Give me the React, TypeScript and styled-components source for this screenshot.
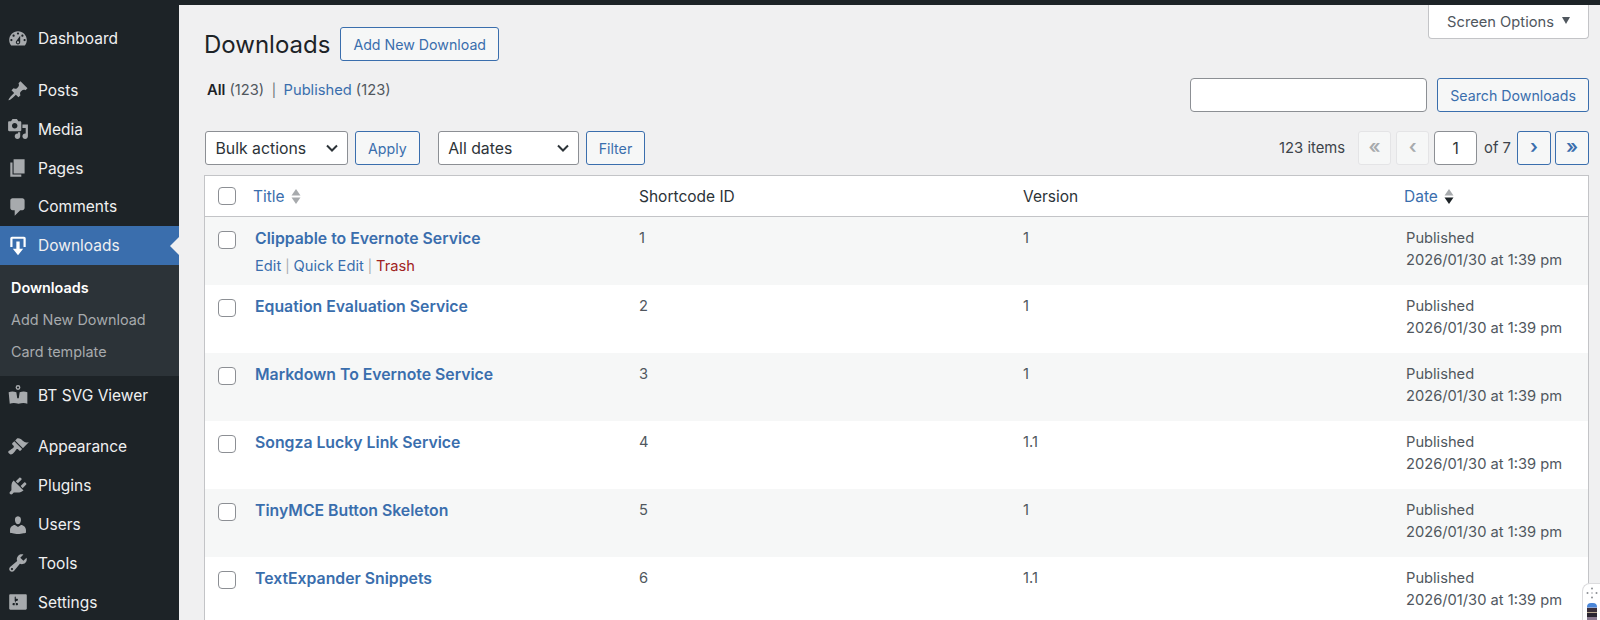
import React from "react";
import styled, { createGlobalStyle } from "styled-components";

const GlobalStyle = createGlobalStyle`
  html, body {
    margin: 0;
    padding: 0;
    height: 620px;
    overflow: hidden;
    background: #f0f0f1;
    font-family: Inter, "Liberation Sans", sans-serif;
    font-size: 15.5px;
    color: #3c434a;
  }
`;

const Page = styled.div`
  display: flex;
  flex-direction: column;
  height: 620px;
  overflow: hidden;
`;

const TopBar = styled.div`
  height: 5px;
  flex: none;
  background: #1d2327;
`;

const Body = styled.div`
  display: flex;
  flex: 1;
  min-height: 0;
`;

const Sidebar = styled.nav`
  width: 179px;
  flex: none;
  background: #1d2327;
  padding-top: 14.4px;
`;

const MenuItem = styled.a<{ $current?: boolean; $gap?: number }>`
  position: relative;
  display: flex;
  align-items: center;
  height: 38.8px;
  margin-top: ${(p) => p.$gap ?? 0}px;
  padding-left: 7px;
  color: #f0f0f1;
  background: ${(p) => (p.$current ? "#3a6ead" : "transparent")};

  svg {
    width: 22px;
    height: 22px;
    flex: none;
    fill: ${(p) => (p.$current ? "#fff" : "#a7aaad")};
  }

  span {
    margin-left: 9px;
  }
`;

const CurrentArrow = styled.i`
  position: absolute;
  right: 0;
  top: 50%;
  margin-top: -9px;
  border: 9px solid transparent;
  border-left-width: 0;
  border-right: 9px solid #f0f0f1;
  width: 0;
  height: 0;
`;

const SubMenu = styled.div`
  display: flex;
  flex-direction: column;
  height: 110.6px;
  padding: 6.6px 0 0 11px;
  box-sizing: border-box;
  background: #2c3338;
`;

const SubItem = styled.a<{ $active?: boolean }>`
  height: 32px;
  display: flex;
  align-items: center;
  font-size: 14.4px;
  color: ${(p) => (p.$active ? "#fff" : "#a7aaad")};
  font-weight: ${(p) => (p.$active ? 600 : 400)};
`;

const Main = styled.main`
  flex: 1;
  min-width: 0;
  position: relative;
  padding: 0 11px 0 25px;
`;

const ScreenOptions = styled.div`
  position: absolute;
  top: 0;
  right: 11px;
  width: 161px;
  height: 34px;
  box-sizing: border-box;
  display: flex;
  align-items: center;
  justify-content: center;
  gap: 8px;
  background: #fff;
  border: 1px solid #c3c4c7;
  border-top: none;
  border-radius: 0 0 4px 4px;
  color: #50575e;
  font-size: 14.7px;

  i {
    width: 0;
    height: 0;
    border: 4.5px solid transparent;
    border-top: 7px solid #50575e;
    border-bottom: none;
    margin-top: -3px;
  }
`;

const TitleRow = styled.div`
  display: flex;
  align-items: center;
  gap: 10px;
  padding-top: 22px;
`;

const Heading = styled.h1`
  margin: 0;
  font-size: 24px;
  font-weight: 400;
  color: #1d2327;
`;

const Button = styled.a<{ $w?: number; $disabled?: boolean; $glyph?: boolean }>`
  display: inline-flex;
  align-items: center;
  justify-content: center;
  box-sizing: border-box;
  height: 34px;
  width: ${(p) => (p.$w ? `${p.$w}px` : "auto")};
  padding: ${(p) => (p.$w ? 0 : "0 12px")};
  flex: none;
  font-size: ${(p) => (p.$glyph ? "19px" : "14.2px")};
  font-weight: ${(p) => (p.$glyph ? 600 : 400)};
  padding-bottom: ${(p) => (p.$glyph ? "3px" : "0")};
  color: ${(p) => (p.$disabled ? "#a7aaad" : "#3a6ead")};
  background: #f6f7f7;
  border: 1px solid ${(p) => (p.$disabled ? "#e4e4e6" : "#3a6ead")};
  border-radius: 3px;
`;

const NextButton = styled(Button)`
  margin-right: -1px;
`;

const Filters = styled.div`
  margin-top: 20px;
  padding-left: 3px;
  font-size: 14.7px;
  height: 18px;
  color: #50575e;

  b {
    color: #1d2327;
    font-weight: 600;
  }

  a {
    color: #3a6ead;
  }
`;

const Separator = styled.span`
  margin: 0 7.5px;
  font-size: 13px;
  color: #646970;
`;

const SearchBox = styled.div`
  display: flex;
  gap: 10px;
  position: absolute;
  top: 73px;
  right: 11px;
`;

const Input = styled.div`
  box-sizing: border-box;
  width: 237px;
  height: 34px;
  background: #fff;
  border: 1px solid #8c8f94;
  border-radius: 4px;
`;

const ToolBar = styled.div`
  display: flex;
  align-items: center;
  justify-content: space-between;
  margin-top: 32px;
  padding-left: 1px;
  height: 34px;
`;

const Group = styled.div<{ $gap?: number }>`
  display: flex;
  align-items: center;
  gap: ${(p) => p.$gap ?? 7}px;
`;

const Select = styled.div<{ $w: number }>`
  box-sizing: border-box;
  display: flex;
  align-items: center;
  justify-content: space-between;
  width: ${(p) => p.$w}px;
  height: 34px;
  padding: 0 8px 0 9.5px;
  background: #fff;
  border: 1px solid #8c8f94;
  border-radius: 3px;
  color: #2c3338;
  font-size: 15.8px;

  svg {
    width: 14px;
    height: 14px;
    stroke: #2c3338;
    fill: none;
    stroke-width: 2;
  }
`;

const PageInput = styled.div`
  box-sizing: border-box;
  display: flex;
  align-items: center;
  justify-content: center;
  width: 43px;
  height: 34px;
  background: #fff;
  border: 1px solid #8c8f94;
  border-radius: 4px;
  color: #2c3338;
`;

const Count = styled.span`
  font-size: 14.8px;
  color: #3c434a;
`;

const PageCount = styled(Count)`
  margin: 0 1px 0 2px;
`;

const Pagination = styled(Group)`
  gap: 5px;
  margin-left: 8px;
`;

const Table = styled.div`
  margin-top: 10px;
  background: #fff;
  border: 1px solid #c3c4c7;
  border-bottom: none;
`;

const gridColumns = "434px 384px 381px 1fr";

const HeaderRow = styled.div`
  display: grid;
  grid-template-columns: ${gridColumns};
  height: 40px;
  align-items: center;
  border-bottom: 1px solid #c3c4c7;
  font-size: 15.5px;
  color: #2c3338;
`;

const Row = styled.div<{ $alt?: boolean }>`
  display: grid;
  grid-template-columns: ${gridColumns};
  height: 68px;
  box-sizing: border-box;
  padding-top: 10px;
  background: ${(p) => (p.$alt ? "#f6f7f7" : "#fff")};
  font-size: 14.7px;
  color: #50575e;
  line-height: 22px;
`;

const TitleCell = styled.div<{ $head?: boolean }>`
  display: flex;
  align-items: ${(p) => (p.$head ? "center" : "flex-start")};
  padding-left: 13px;
`;

const Checkbox = styled.i<{ $head?: boolean }>`
  flex: none;
  display: block;
  box-sizing: border-box;
  width: 18px;
  height: 18px;
  margin: ${(p) => (p.$head ? "0 17px 0 0" : "4px 15px 0 0")};
  background: #fff;
  border: 1px solid #8c8f94;
  border-radius: 4px;
`;

const HeadLink = styled.a`
  display: inline-flex;
  align-items: center;
  gap: 6px;
  color: #3a6ead;
`;

const RowTitle = styled.a`
  display: block;
  margin-left: 4px;
  font-weight: 600;
  font-size: 15.8px;
  line-height: 24px;
  color: #3a6ead;
`;

const Actions = styled.div`
  margin: 4px 0 0 4px;
  font-size: 14.7px;
  color: #a7aaad;

  a {
    color: #3a6ead;
  }

  a.trash {
    color: #a02222;
  }
`;

const Pipe = styled.span`
  margin: 0 4px;
  font-size: 13px;
`;

const DateCell = styled.div`
  padding-left: 2px;
`;

const SortIcon = styled.svg`
  width: 10px;
  height: 17px;
`;

const FloatingWidget = styled.div`
  position: absolute;
  right: 0;
  bottom: 0;
  width: 18px;
  height: 37px;
  display: flex;
  flex-direction: column;
  align-items: center;
  padding-top: 3px;
  box-sizing: border-box;
  background: #fff;
  border: 1px solid #dcdcde;
  border-right: none;
  border-bottom: none;
  border-radius: 8px 0 0 0;

  svg {
    width: 12px;
    height: 12px;
    flex: none;
  }
`;

const WidgetStack = styled.div`
  width: 10px;
  height: 20px;
  margin-top: 4px;
  border-radius: 4px 4px 0 0;
  background: linear-gradient(
    #4a86d8 0 22%,
    #8fa8d8 22% 32%,
    #3a2f3a 32% 50%,
    #b8a890 50% 60%,
    #2a2530 60% 80%,
    #8a7a90 80%
  );
`;

const icons: Record<string, string> = {
  dashboard:
    "M3.76 16h12.48c1.1-1.37 1.76-3.11 1.76-5 0-4.42-3.58-8-8-8s-8 3.58-8 8c0 1.89.66 3.63 1.76 5zM10 4c.55 0 1 .45 1 1s-.45 1-1 1-1-.45-1-1 .45-1 1-1zM6 6c.55 0 1 .45 1 1s-.45 1-1 1-1-.45-1-1 .45-1 1-1zm8 0c.55 0 1 .45 1 1s-.45 1-1 1-1-.45-1-1 .45-1 1-1zm-5.37 5.55L12 7v6c0 1.1-.9 2-2 2s-2-.9-2-2c0-.57.24-1.08.63-1.45zM4 10c.55 0 1 .45 1 1s-.45 1-1 1-1-.45-1-1 .45-1 1-1zm12 0c.55 0 1 .45 1 1s-.45 1-1 1-1-.45-1-1 .45-1 1-1zm-5 3c0-.55-.45-1-1-1s-1 .45-1 1 .45 1 1 1 1-.45 1-1z",
  posts:
    "M10.44 3.02l1.82-1.82 6.36 6.35-1.83 1.82c-1.05-.68-2.48-.57-3.41.36l-.75.75c-.92.93-1.04 2.35-.35 3.41l-1.83 1.82-2.41-2.41-2.8 2.79c-.42.42-3.38 2.71-3.8 2.29s1.86-3.39 2.28-3.81l2.79-2.79L4.1 9.36l1.83-1.82c1.05.69 2.48.57 3.4-.36l.75-.75c.93-.92 1.05-2.35.36-3.41z",
  media:
    "M13 11V4c0-.55-.45-1-1-1h-1.67L9 1H5L3.67 3H2c-.55 0-1 .45-1 1v7c0 .55.45 1 1 1h10c.55 0 1-.45 1-1zM7 4.5c1.38 0 2.5 1.12 2.5 2.5S8.38 9.5 7 9.5 4.5 8.38 4.5 7 5.62 4.5 7 4.5zM14 6h5v10.5c0 1.38-1.12 2.5-2.5 2.5S14 17.88 14 16.5s1.12-2.5 2.5-2.5c.17 0 .34.02.5.05V9h-3V6zm-4 8.05V13h2v3.5c0 1.38-1.12 2.5-2.5 2.5S7 17.88 7 16.5 8.12 14 9.5 14c.17 0 .34.02.5.05z",
  pages: "M6 15V2h10v13H6zm-1 1h8v2H3V5h2v11z",
  comments:
    "M5 2h9c1.1 0 2 .9 2 2v7c0 1.1-.9 2-2 2h-2l-5 5v-5H5c-1.1 0-2-.9-2-2V4c0-1.1.9-2 2-2z",
  downloads:
    "M4.500 1.500h11a1.500 1.500 0 0 1 1.500 1.500v8h-2V3.500H5V11H3V3a1.500 1.500 0 0 1 1.500-1.500zM8.500 6h3v6.500h3.200L10 18.500l-4.700-6h3.200z",
  viewer:
    "M10 1a2.200 2.200 0 1 0 0 4.400 2.200 2.200 0 0 0 0-4.400zm0 1.200a1 1 0 1 1 0 2 1 1 0 0 1 0-2zM1.500 7.500c2.300-1 4.500-1 7 0l.8 5.500h1.400l.8-5.500c2.500-1 4.700-1 7 0V18c-2.300-1-4.700-1-8 0-3.300-1-5.700-1-8 0z",
  appearance:
    "M14.48 11.06L7.41 3.99l1.5-1.5c.5-.56 2.3-.47 3.51.32 1.21.8 1.43 1.28 2.91 2.1 1.18.64 2.45 1.26 4.45.85zm-.71.71L6.7 4.7 4.93 6.47c-.39.39-.39 1.02 0 1.41l1.06 1.06c.39.39.39 1.03 0 1.42-.6.6-1.43 1.11-2.21 1.69-.35.26-.7.53-1.01.84C1.43 13.23.4 14.37 2 16s2.77.59 4.11-.74c.31-.31.58-.66.84-1.01.58-.78 1.09-1.61 1.69-2.21.39-.39 1.03-.39 1.42 0l1.06 1.06c.39.39 1.02.39 1.41 0z",
  plugins:
    "M13.11 4.36L9.87 7.6 8 5.73l3.24-3.24c.35-.34 1.05-.2 1.56.32.52.51.66 1.21.31 1.55zm-8 1.77l.91-1.12 9.01 9.01-1.19.84c-.71.71-2.63 1.16-3.82 1.16H6.14L4.9 17.26c-.59.59-1.54.59-2.12 0-.59-.58-.59-1.53 0-2.12l1.24-1.24v-3.88c0-1.13.4-3.19 1.09-3.89zm7.26 3.97l3.24-3.24c.34-.35 1.04-.21 1.55.31.52.51.66 1.21.31 1.55l-3.24 3.25z",
  users:
    "M10 9.25c-2.27 0-2.73-3.44-2.73-3.44C7 4.02 7.82 2 9.97 2c2.16 0 2.98 2.02 2.71 3.81 0 0-.41 3.44-2.68 3.44zm0 2.57L12.72 10c2.39 0 4.52 2.33 4.52 4.53v2.49s-3.65 1.13-7.24 1.13c-3.65 0-7.24-1.13-7.24-1.13v-2.49c0-2.25 1.94-4.48 4.47-4.48z",
  tools:
    "M16.68 9.77c-1.34 1.34-3.3 1.67-4.95.99l-5.41 6.52c-.99.99-2.59.99-3.58 0s-.99-2.59 0-3.57l6.52-5.42c-.68-1.65-.35-3.61.99-4.95 1.28-1.28 3.12-1.62 4.72-1.06l-2.89 2.89 2.82 2.82 2.86-2.87c.53 1.58.18 3.39-1.08 4.65zM3.81 16.21c.4.39 1.04.39 1.43 0 .4-.4.4-1.04 0-1.43-.39-.4-1.03-.4-1.43 0-.39.39-.39 1.03 0 1.43z",
  settings:
    "M18 16V4c0-.55-.45-1-1-1H3c-.55 0-1 .45-1 1v12c0 .55.45 1 1 1h14c.55 0 1-.45 1-1zM8 11h1c.55 0 1 .45 1 1s-.45 1-1 1H8v1.5c0 .28-.22.5-.5.5s-.5-.22-.5-.5V13H6c-.55 0-1-.45-1-1s.45-1 1-1h1V5.5c0-.28.22-.5.5-.5s.5.22.5.5V7h1c.55 0 1 .45 1 1s-.45 1-1 1h-1v5.5c0 .28-.22.5-.5.5s-.5-.22-.5-.5V9z",
};

function Icon({ name }: { name: string }) {
  return (
    <svg viewBox="0 0 20 20">
      <path d={icons[name]} />
    </svg>
  );
}

function Chevron() {
  return (
    <svg viewBox="0 0 14 14">
      <path d="M2 4.500l5 5 5-5" />
    </svg>
  );
}

function Sort({ down }: { down?: boolean }) {
  return (
    <SortIcon viewBox="0 0 10 17">
      <path d="M5 1l4.500 6.500H.5z" fill="#a7aaad" />
      <path d="M5 16L.5 9.500h9z" fill={down ? "#1d2327" : "#a7aaad"} />
    </SortIcon>
  );
}

function MoveDots() {
  return (
    <svg viewBox="0 0 12 12" fill="#8c8f94">
      <circle cx="6" cy="1.500" r="1" />
      <circle cx="6" cy="10.500" r="1" />
      <circle cx="1.500" cy="6" r="1" />
      <circle cx="10.500" cy="6" r="1" />
      <circle cx="6" cy="6" r=".7" />
    </svg>
  );
}

const posts = [
  { title: "Clippable to Evernote Service", id: "1", version: "1" },
  { title: "Equation Evaluation Service", id: "2", version: "1" },
  { title: "Markdown To Evernote Service", id: "3", version: "1" },
  { title: "Songza Lucky Link Service", id: "4", version: "1.1" },
  { title: "TinyMCE Button Skeleton", id: "5", version: "1" },
  { title: "TextExpander Snippets", id: "6", version: "1.1" },
];

export default function App() {
  return (
    <Page>
      <GlobalStyle />
      <TopBar />
      <Body>
        <Sidebar>
          <MenuItem>
            <Icon name="dashboard" />
            <span>Dashboard</span>
          </MenuItem>
          <MenuItem $gap={13}>
            <Icon name="posts" />
            <span>Posts</span>
          </MenuItem>
          <MenuItem>
            <Icon name="media" />
            <span>Media</span>
          </MenuItem>
          <MenuItem>
            <Icon name="pages" />
            <span>Pages</span>
          </MenuItem>
          <MenuItem>
            <Icon name="comments" />
            <span>Comments</span>
          </MenuItem>
          <MenuItem $current>
            <Icon name="downloads" />
            <span>Downloads</span>
            <CurrentArrow />
          </MenuItem>
          <SubMenu>
            <SubItem $active>Downloads</SubItem>
            <SubItem>Add New Download</SubItem>
            <SubItem>Card template</SubItem>
          </SubMenu>
          <MenuItem>
            <Icon name="viewer" />
            <span>BT SVG Viewer</span>
          </MenuItem>
          <MenuItem $gap={13}>
            <Icon name="appearance" />
            <span>Appearance</span>
          </MenuItem>
          <MenuItem>
            <Icon name="plugins" />
            <span>Plugins</span>
          </MenuItem>
          <MenuItem>
            <Icon name="users" />
            <span>Users</span>
          </MenuItem>
          <MenuItem>
            <Icon name="tools" />
            <span>Tools</span>
          </MenuItem>
          <MenuItem>
            <Icon name="settings" />
            <span>Settings</span>
          </MenuItem>
        </Sidebar>
        <Main>
          <ScreenOptions>
            Screen Options <i />
          </ScreenOptions>
          <TitleRow>
            <Heading>Downloads</Heading>
            <Button>Add New Download</Button>
          </TitleRow>
          <Filters>
            <b>All</b> (123)<Separator>|</Separator>
            <a>Published</a> (123)
          </Filters>
          <SearchBox>
            <Input />
            <Button>Search Downloads</Button>
          </SearchBox>
          <ToolBar>
            <Group $gap={18}>
              <Group>
                <Select $w={143}>
                  Bulk actions <Chevron />
                </Select>
                <Button>Apply</Button>
              </Group>
              <Group>
                <Select $w={141}>
                  All dates <Chevron />
                </Select>
                <Button>Filter</Button>
              </Group>
            </Group>
            <Group $gap={5}>
              <Count>123 items</Count>
              <Pagination>
                <Button $w={33} $disabled $glyph>«</Button>
                <Button $w={33} $disabled $glyph>‹</Button>
                <PageInput>1</PageInput>
                <PageCount>of 7</PageCount>
                <NextButton $w={34} $glyph>›</NextButton>
                <Button $w={34} $glyph>»</Button>
              </Pagination>
            </Group>
          </ToolBar>
          <Table>
            <HeaderRow>
              <TitleCell $head>
                <Checkbox $head />
                <HeadLink>
                  Title <Sort />
                </HeadLink>
              </TitleCell>
              <div>Shortcode ID</div>
              <div>Version</div>
              <div>
                <HeadLink>
                  Date <Sort down />
                </HeadLink>
              </div>
            </HeaderRow>
            {posts.map((p, i) => (
              <Row key={p.id} $alt={i % 2 === 0}>
                <TitleCell>
                  <Checkbox />
                  <div>
                    <RowTitle>{p.title}</RowTitle>
                    {i === 0 && (
                      <Actions>
                        <a>Edit</a>
                        <Pipe>|</Pipe>
                        <a>Quick Edit</a>
                        <Pipe>|</Pipe>
                        <a className="trash">Trash</a>
                      </Actions>
                    )}
                  </div>
                </TitleCell>
                <div>{p.id}</div>
                <div>{p.version}</div>
                <DateCell>
                  Published
                  <br />
                  2026/01/30 at 1:39 pm
                </DateCell>
              </Row>
            ))}
          </Table>
          <FloatingWidget>
            <MoveDots />
            <WidgetStack />
          </FloatingWidget>
        </Main>
      </Body>
    </Page>
  );
}
